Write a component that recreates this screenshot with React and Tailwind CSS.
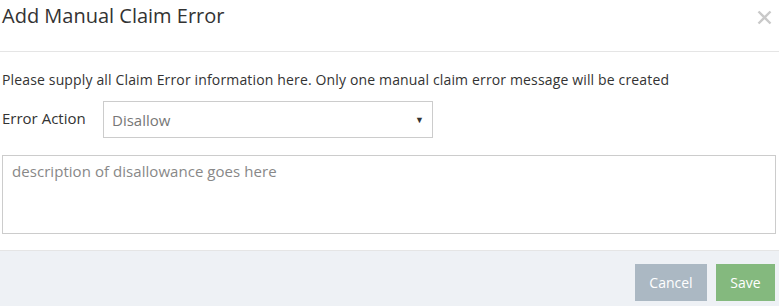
export default function App() {
  return (
    <div className="w-[779px] h-[306px] bg-white text-[#333] overflow-hidden" style={{ fontFamily: '"Open Sans", "Liberation Sans", sans-serif' }}>
      {/* Header */}
      <div className="h-[52px] flex items-start justify-between border-b border-[#e5e5e5] pl-[2px] pr-[7px]">
        <h3 className="text-[20px] leading-[30px] mt-[1px] text-[#333]">Add Manual Claim Error</h3>
        <button className="mt-[10px] w-[15px] h-[15px]">
          <svg width="15" height="15" viewBox="0 0 15 15">
            <path d="M1.5 1.5 L13.5 13.5 M13.5 1.5 L1.5 13.5" stroke="#c9c9c9" strokeWidth="2.4" />
          </svg>
        </button>
      </div>

      {/* Body */}
      <div className="pl-[2px] pr-[4px] pt-[18px] pb-[16px]">
        <p className="text-[14px] leading-[20px] tracking-[0.15px]">
          Please supply all Claim Error information here. Only one manual claim error message will be created
        </p>
        <div className="flex items-center mt-[11px]">
          <label className="w-[101px] text-[15px] pb-[2px]">Error Action</label>
          <div className="w-[330px] h-[37px] border border-[#ccc] flex items-center justify-between pl-[8px] pr-[8px] text-[15px] text-[#777]">
            <span className="mt-[2px]">Disallow</span>
            <span className="text-[9px] text-[#333]">▼</span>
          </div>
        </div>
        <textarea
          className="block mt-[17px] w-[774px] h-[79px] border border-[#ccc] px-[9px] py-[4px] text-[15px] tracking-[0.05px] resize-none outline-none placeholder:text-[#888]"
          placeholder="description of disallowance goes here"
        />
      </div>

      {/* Footer */}
      <div className="h-[56px] bg-[#eef1f5] border-t border-[#e5e5e5] flex items-start justify-end gap-[9px] pr-[4px] pt-[13px]">
        <button className="w-[72px] h-[37px] bg-[#abb8c3] text-white text-[14px]">Cancel</button>
        <button className="w-[59px] h-[37px] bg-[#84b97e] text-white text-[14px]">Save</button>
      </div>
    </div>
  )
}
